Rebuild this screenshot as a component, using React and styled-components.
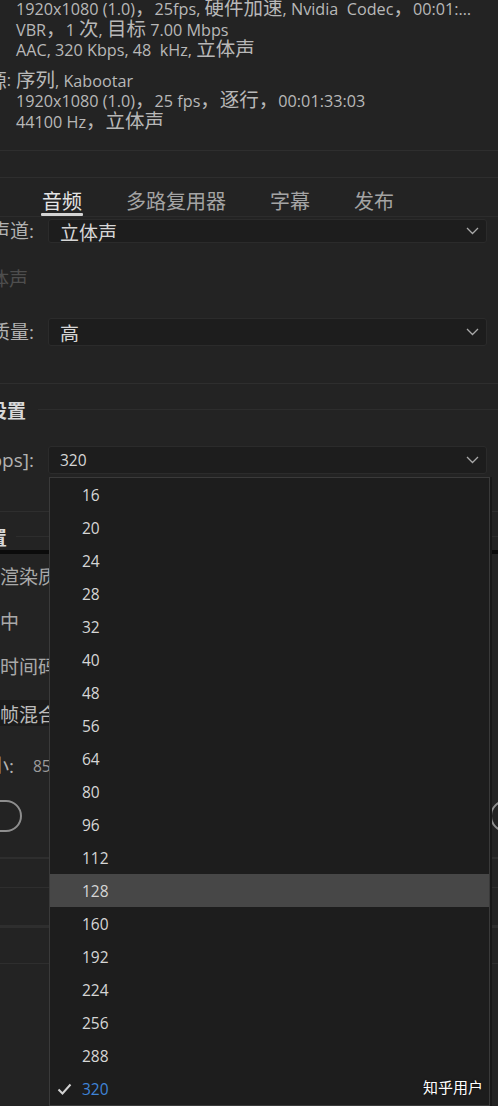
import React from "react";
import styled, { createGlobalStyle } from "styled-components";

const GlobalStyle = createGlobalStyle`
  html, body {
    margin: 0;
    padding: 0;
    background: #232323;
  }
  body {
    font-family: "Open Sans", "Noto Sans CJK SC", sans-serif;
  }
`;

// CJK runs get a bigger size, like the Latin/CJK mix in the original UI font
const CJK_RE = /([\u2E80-\u9FFF\u3000-\u303F\uFF00-\uFFEF]+)/;

const Mixed = ({ text }) =>
  text.split(CJK_RE).map((part, i) =>
    i % 2 ? <Cjk key={i}>{part}</Cjk> : <React.Fragment key={i}>{part}</React.Fragment>
  );

const Chevron = () => (
  <svg width="13" height="8" viewBox="0 0 13 8">
    <polyline points="1,1 6.5,6.5 12,1" fill="none" stroke="#a9a9a9" strokeWidth="1.3" />
  </svg>
);

const Check = () => (
  <svg width="15" height="12" viewBox="0 0 15 12">
    <polyline points="1.5,6.5 5.5,10.5 13.5,1.5" fill="none" stroke="#d2d2d2" strokeWidth="2" />
  </svg>
);

const info = [
  { lines: ["1920x1080 (1.0)，25fps, 硬件加速, Nvidia\u00a0\u00a0Codec，00:01:…", "VBR，1 次, 目标 7.00 Mbps", "AAC, 320 Kbps, 48\u00a0\u00a0kHz, 立体声"] },
  { label: "源:", lines: ["序列, Kabootar", "1920x1080 (1.0)，25 fps，逐行，00:01:33:03", "44100 Hz，立体声"] },
];

const tabs = ["音频", "多路复用器", "字幕", "发布"];

const bitrates = [16, 20, 24, 28, 32, 40, 48, 56, 64, 80, 96, 112, 128, 160, 192, 224, 256, 288, 320];

const App = () => {
  return (
    <Screen>
      <GlobalStyle />
      <Panel>
        <Info>
          {info.map((block, b) => (
            <InfoBlock key={b}>
              {block.lines.map((line, i) => (
                <InfoLine key={i}>
                  <InfoLabel>{i === 0 && block.label ? <Mixed text={block.label} /> : null}</InfoLabel>
                  <span>
                    <Mixed text={line} />
                  </span>
                </InfoLine>
              ))}
            </InfoBlock>
          ))}
        </Info>

        <Divider $top={22} />
        <Divider $top={26} />

        <TabBar>
          {tabs.map((t, i) => (
            <Tab key={t} $active={i === 0}>
              {t}
            </Tab>
          ))}
        </TabBar>

        <FieldRow $top={2}>
          <Label>声道:</Label>
          <Select $h={24}>
            <span>立体声</span>
            <Chevron />
          </Select>
        </FieldRow>

        <MutedNote>立体声</MutedNote>

        <FieldRow $top={29}>
          <Label>音频质量:</Label>
          <Select $h={28}>
            <span>高</span>
            <Chevron />
          </Select>
        </FieldRow>

        <Divider $top={37} />

        <Heading $top={14} $gap={12}>比特率设置</Heading>

        <FieldRow $top={24}>
          <Label>
            <Mixed text="比特率 [kbps]:" />
          </Label>
          <Select $h={28}>
            <SelectValue>320</SelectValue>
            <Chevron />
          </Select>
        </FieldRow>

        <Divider $top={37} />

        <Heading $top={13} $gap={9}>高级设置</Heading>
        <BlackBar />

        <PlainLine $top={11}>使用最高渲染质量</PlainLine>
        <PlainLine $top={23}>导入项目中</PlainLine>
        <PlainLine $top={23}>设置开始时间码</PlainLine>

        <InterpRow>
          <Label>时间插值:</Label>
          <InterpBox>帧混合</InterpBox>
        </InterpRow>

        <EstimateRow>
          <Label>估计文件大小:</Label>
          <EstimateValue>85 MB</EstimateValue>
        </EstimateRow>

        <ButtonRow>
          <GhostButton />
          <GhostButton />
        </ButtonRow>

        <Divider $top={25} $h={2} />
        <Divider $top={28} />
        <Divider $top={37} $h={3} />
        <Divider $top={35} />
      </Panel>

      <Dropdown>
        {bitrates.map((v) => (
          <Option key={v} $hover={v === 128}>
            <CheckSlot>{v === 320 && <Check />}</CheckSlot>
            <OptionText $selected={v === 320}>{v}</OptionText>
          </Option>
        ))}
      </Dropdown>

      <Watermark>知乎用户</Watermark>
    </Screen>
  );
};

export default App;

const Screen = styled.div`
  position: relative;
  width: 498px;
  height: 1106px;
  overflow: hidden;
  background: #232323;
  color: #b6b6b6;
`;

/* the screenshot crops ~76px of the panel's left side */
const Panel = styled.div`
  width: 634px;
  margin-left: -76px;
`;

const Cjk = styled.span`
  font-family: "Noto Sans CJK SC", sans-serif;
  font-size: 19.5px;
  line-height: 1;
`;

const Info = styled.div`
  display: flex;
  flex-direction: column;
  gap: 10px;
  height: 131px;
  margin-top: -3px;
`;

const InfoBlock = styled.div`
  display: flex;
  flex-direction: column;
`;

const InfoLine = styled.div`
  display: grid;
  grid-template-columns: 87px 1fr;
  column-gap: 5px;
  align-items: center;
  height: 20.5px;
  font-size: 16.2px;
  line-height: 20.5px;
  color: #b8b8b8;
  white-space: nowrap;
`;

const InfoLabel = styled.span`
  display: flex;
  justify-content: flex-end;
`;

const Divider = styled.div`
  height: ${(p) => p.$h || 1}px;
  margin-top: ${(p) => p.$top}px;
  background: #2e2e2e;
`;

const TabBar = styled.div`
  display: flex;
  gap: 44px;
  height: 38px;
  padding-left: 118px;
  border-bottom: 1px solid #2c2c2c;
`;

const Tab = styled.div`
  font-family: "Noto Sans CJK SC", sans-serif;
  font-size: 20px;
  line-height: 23px;
  padding-top: 11px;
  color: ${(p) => (p.$active ? "#e4e4e4" : "#a4a4a4")};

  &::after {
    content: "";
    display: block;
    height: 3px;
    margin: 1px -1px 0;
    border-radius: 1px;
    background: ${(p) => (p.$active ? "#d4d4d4" : "transparent")};
  }
`;

const FieldRow = styled.div`
  display: grid;
  grid-template-columns: 110px 1fr;
  column-gap: 14px;
  align-items: center;
  padding-right: 71px;
  margin-top: ${(p) => p.$top}px;
`;

const Label = styled.div`
  display: flex;
  justify-content: flex-end;
  white-space: nowrap;
  font-family: "Open Sans", "Noto Sans CJK SC", sans-serif;
  font-size: 19px;
  line-height: 22px;
  height: 22px;
  color: #b2b2b2;
`;

const Select = styled.div`
  box-sizing: border-box;
  height: ${(p) => p.$h}px;
  display: flex;
  align-items: center;
  justify-content: space-between;
  padding: 0 7px 0 11px;
  background: #1d1d1d;
  border: 1px solid #2b2b2b;
  border-radius: 3px;
  font-family: "Noto Sans CJK SC", sans-serif;
  font-size: 19px;
  color: #d6d6d6;
`;

const SelectValue = styled.span`
  font-family: "Open Sans", sans-serif;
  font-size: 15.5px;
`;

const MutedNote = styled.div`
  width: 104px;
  margin-top: 24px;
  text-align: right;
  font-family: "Noto Sans CJK SC", sans-serif;
  font-size: 19px;
  line-height: 22px;
  height: 22px;
  color: #4e4e4e;
`;

const Heading = styled.div`
  display: flex;
  align-items: center;
  gap: ${(p) => p.$gap}px;
  height: 24px;
  margin-top: ${(p) => p.$top}px;
  padding-left: 7px;
  font-family: "Noto Sans CJK SC", sans-serif;
  font-size: 19px;
  font-weight: 700;
  line-height: 24px;
  color: #d8d8d8;

  &::after {
    content: "";
    flex: 1;
    height: 1px;
    margin-top: -1px;
    background: #2d2d2d;
  }
`;

const BlackBar = styled.div`
  height: 4px;
  margin-top: 1px;
  background: #0b0b0b;
`;

const PlainLine = styled.div`
  margin-top: ${(p) => p.$top}px;
  height: 22px;
  font-family: "Noto Sans CJK SC", sans-serif;
  font-size: 19px;
  line-height: 22px;
  color: #a9a9a9;
  white-space: nowrap;
`;

const InterpRow = styled.div`
  display: grid;
  grid-template-columns: 60px 1fr;
  column-gap: 6px;
  align-items: center;
  margin-top: 23px;
`;

const InterpBox = styled.div`
  height: 26px;
  width: 200px;
  display: flex;
  align-items: center;
  padding-left: 10px;
  background: #1b1b1b;
  font-family: "Noto Sans CJK SC", sans-serif;
  font-size: 19px;
  color: #bcbcbc;
`;

const EstimateRow = styled.div`
  display: grid;
  grid-template-columns: 90px 1fr;
  column-gap: 19px;
  align-items: center;
  margin-top: 29px;
  height: 22px;
  line-height: 22px;
`;

const EstimateValue = styled.span`
  font-size: 15.5px;
  color: #9c9c9c;
`;

const ButtonRow = styled.div`
  display: flex;
  gap: 468px;
  margin-top: 23px;
`;

const GhostButton = styled.div`
  flex: none;
  box-sizing: border-box;
  width: 98px;
  height: 32px;
  border: 2px solid #8e8e8e;
  border-radius: 16px;
`;

const Dropdown = styled.div`
  position: absolute;
  top: 477px;
  left: 49px;
  width: 441px;
  box-sizing: border-box;
  border: 1px solid #3a3a3a;
  background: #1d1d1d;
  box-shadow: 2px 0 0 #181818;
`;

const Option = styled.div`
  height: 33px;
  display: flex;
  align-items: center;
  background: ${(p) => (p.$hover ? "#474747" : "transparent")};
`;

const CheckSlot = styled.span`
  box-sizing: border-box;
  width: 32px;
  padding-left: 7px;
  display: flex;
  align-items: center;
`;

const OptionText = styled.span`
  font-family: "Open Sans", sans-serif;
  font-size: 15.5px;
  color: ${(p) => (p.$selected ? "#3f84d8" : "#d6d6d6")};
`;

const Watermark = styled.div`
  position: absolute;
  right: 15px;
  top: 1077px;
  font-family: "Noto Sans CJK SC", sans-serif;
  font-size: 15px;
  line-height: 20px;
  color: #ffffff;
  text-shadow: 0 0 2px rgba(0, 0, 0, 0.6);
`;
